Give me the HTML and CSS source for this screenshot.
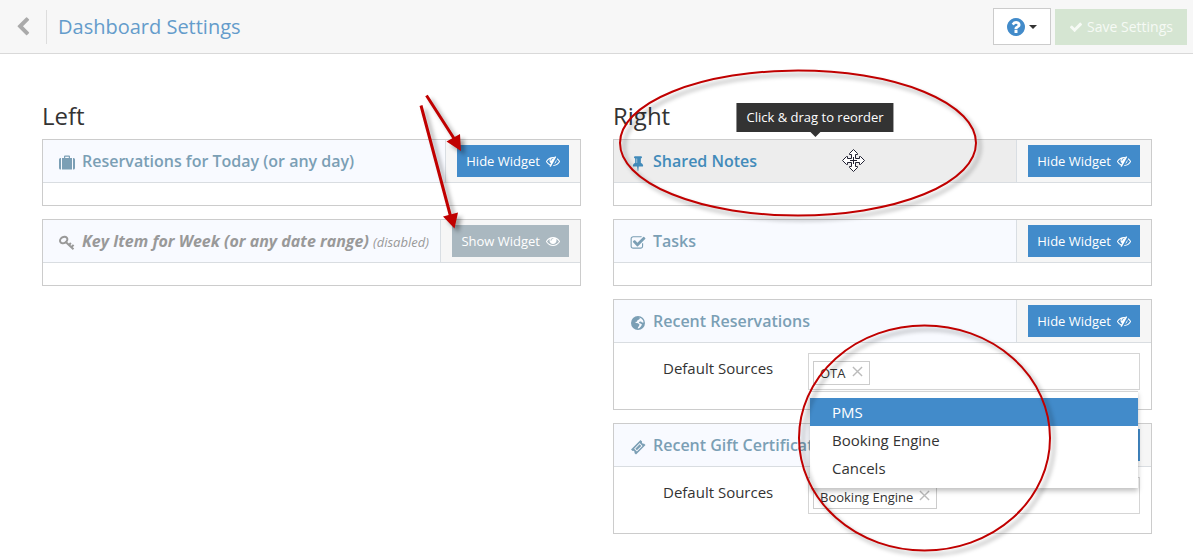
FILE: index.html
```html
<!DOCTYPE html>
<html lang="en">
<head>
    <meta charset="UTF-8">
    <meta name="viewport" content="width=device-width, initial-scale=1.0">
    <title>Dashboard Settings</title>
    <link rel="stylesheet" href="styles.css">
</head>
<body>
    <!-- Shared icons -->
    <svg class="sprite" aria-hidden="true">
        <symbol id="eye" viewBox="0 0 1792 1792"><path d="M1664 960q-152-236-381-353 61 104 61 225 0 185-131.5 316.5t-316.5 131.5-316.5-131.5-131.5-316.5q0-121 61-225-229 117-381 353 133 205 333.5 326.5t434.5 121.5 434.5-121.5 333.5-326.5zm-720-384q0-20-14-34t-34-14q-125 0-214.5 89.5t-89.5 214.5q0 20 14 34t34 14 34-14 14-34q0-86 61-147t147-61q20 0 34-14t14-34zm848 384q0 34-20 69-140 230-376.5 368.5t-499.5 138.5-499.5-139-376.5-368q-20-35-20-69t20-69q140-229 376.5-368t499.5-139 499.5 139 376.5 368q20 35 20 69z"/></symbol>
        <symbol id="eye-slash" viewBox="0 0 1792 1792"><path d="M555 1335l78-141q-87-63-136-159t-49-203q0-121 61-225-229 117-381 353 167 258 427 375zm389-759q0-20-14-34t-34-14q-125 0-214.5 89.5t-89.5 214.5q0 20 14 34t34 14 34-14 14-34q0-86 61-147t147-61q20 0 34-14t14-34zm363-191q0 7-1 9-106 189-316 567t-315 566l-49 89q-10 16-28 16-12 0-134-70-16-10-16-28 0-12 44-87-143-65-263.5-173t-208.5-245q-20-31-20-69t20-69q153-235 380-371t496-136q89 0 180 17l54-97q10-16 28-16 5 0 18 6t31 15.5 33 18.5 31.5 18.5 19.5 11.5q16 10 16 27zm37 447q0 139-79 253.5t-209 164.500l280-502q8 45 8 84zm448 128q0 35-20 69-39 64-109 145-150 172-347.5 267t-419.5 95l74-132q212-18 392.5-137t301.5-307q-115-179-282-294l63-112q95 64 182.5 153t144.5 184q20 34 20 69z"/></symbol>
        <symbol id="times" viewBox="0 0 12 12"><path d="M1 1l10 10M11 1L1 11" fill="none" stroke="currentColor" stroke-width="1.5"/></symbol>
    </svg>

    <!-- Top bar -->
    <header class="topbar">
        <a class="back" href="#" aria-label="Back">
            <svg class="back-icon" viewBox="0 0 1792 1792"><path d="M1427 301l-531 531 531 531q19 19 19 45t-19 45l-166 166q-19 19-45 19t-45-19l-742-742q-19-19-19-45t19-45l742-742q19-19 45-19t45 19l166 166q19 19 19 45t-19 45z"/></svg>
        </a>
        <h1 class="page-title">Dashboard Settings</h1>
        <button class="btn-help" type="button" aria-label="Help">
            <svg class="help-icon" viewBox="128 128 1536 1536"><path d="M1024 1376v-192q0-14-9-23t-23-9h-192q-14 0-23 9t-9 23v192q0 14 9 23t23 9h192q14 0 23-9t9-23zm256-672q0-88-55.5-163t-138.5-116-170-41q-243 0-371 213-15 24 8 42l132 100q7 6 19 6 16 0 25-12 53-68 86-92 34-24 86-24 48 0 85.5 26t37.5 59q0 38-20 61t-68 45q-63 28-115.5 86.5t-52.5 125.5v36q0 14 9 23t23 9h192q14 0 23-9t9-23q0-19 21.5-49.5t54.5-49.5q32-18 49-28.5t46-35 44.5-48 28-60.5 12.5-81zm384 192q0 209-103 385.5t-279.5 279.5-385.5 103-385.5-103-279.5-279.5-103-385.5 103-385.5 279.5-279.5 385.5-103 385.5 103 279.5 279.5 103 385.5z"/></svg>
            <span class="caret"></span>
        </button>
        <button class="btn-save" type="button" disabled>
            <svg class="save-icon" viewBox="0 0 1792 1792"><path d="M1671 566q0 40-28 68l-724 724-136 136q-28 28-68 28t-68-28l-136-136-362-362q-28-28-28-68t28-68l136-136q28-28 68-28t68 28l294 295 656-657q28-28 68-28t68 28l136 136q28 28 28 68z"/></svg>
            Save Settings
        </button>
    </header>

    <main class="columns">
        <!-- Left column -->
        <section class="column">
            <h2 class="column-title">Left</h2>
            <div class="widget">
                <div class="widget-head">
                    <h3 class="widget-title">
                        <svg class="icon" viewBox="0 0 16 16"><path d="M0 4.500Q0 3 1.500 3H2v11.500h-.5Q0 14.500 0 13zM3 3h2V1.500Q5 .5 6 .5h4q1 0 1 1V3h2v11.500H3zm3.200 0h3.600V1.700H6.200zM14 3h.5Q16 3 16 4.500V13q0 1.500-1.500 1.500H14z"/></svg>
                        <span>Reservations for Today (or any day)</span>
                    </h3>
                    <div class="widget-action">
                        <button class="btn" type="button">Hide Widget <svg class="btn-icon"><use href="#eye-slash"/></svg></button>
                    </div>
                </div>
                <div class="widget-body"></div>
            </div>
            <div class="widget disabled">
                <div class="widget-head">
                    <h3 class="widget-title">
                        <svg class="icon" viewBox="0 0 16 16"><g fill="none" stroke="currentColor" stroke-width="2"><ellipse cx="4.700" cy="5" rx="3.800" ry="3" transform="rotate(-30 4.700 5)"/><path d="M7 7.300l7.500 7M12 12.500l2.600-2.600M9.700 10.200l2.200-2.200"/></g></svg>
                        <span>Key Item for Week (or any date range) <small class="note">(disabled)</small></span>
                    </h3>
                    <div class="widget-action">
                        <button class="btn btn-off" type="button">Show Widget <svg class="btn-icon"><use href="#eye"/></svg></button>
                    </div>
                </div>
                <div class="widget-body"></div>
            </div>
        </section>

        <!-- Right column -->
        <section class="column">
            <h2 class="column-title">Right</h2>
            <div class="widget">
                <div class="widget-head">
                    <h3 class="widget-title hovered">
                        <svg class="icon" viewBox="0 0 1792 1792"><path d="M800 864v-448q0-14-9-23t-23-9-23 9-9 23v448q0 14 9 23t23 9 23-9 9-23zm672 352q0 26-19 45t-45 19h-429l-51 483q-2 12-10.5 20.5t-20.5 8.500h-1q-27 0-32-27l-76-485h-404q-26 0-45-19t-19-45q0-123 78.5-221.5t177.5-98.500v-512q-52 0-90-38t-38-90 38-90 90-38h640q52 0 90 38t38 90-38 90-90 38v512q99 0 177.5 98.5t78.5 221.500z"/></svg>
                        <span>Shared Notes</span>
                        <span class="tooltip" role="tooltip">Click &amp; drag to reorder</span>
                        <svg class="move-cursor" viewBox="0 0 23 23"><path d="M11.500.5l4 4v1h-2v4h4v-2h1l4 4-4 4h-1v-2h-4v4h2v1l-4 4-4-4v-1h2v-4h-4v2h-1l-4-4 4-4h1v2h4v-4h-2v-1z"/><path d="M11.500 8v7M8 11.500h7"/></svg>
                    </h3>
                    <div class="widget-action">
                        <button class="btn" type="button">Hide Widget <svg class="btn-icon"><use href="#eye-slash"/></svg></button>
                    </div>
                </div>
                <div class="widget-body"></div>
            </div>
            <div class="widget">
                <div class="widget-head">
                    <h3 class="widget-title">
                        <svg class="icon" viewBox="0 0 1792 1792"><path d="M1472 930v318q0 119-84.5 203.5t-203.5 84.500h-832q-119 0-203.5-84.5t-84.5-203.500v-832q0-119 84.5-203.5t203.5-84.500h832q63 0 117 25 15 7 18 23 3 17-9 29l-49 49q-10 10-23 10-3 0-9-2-23-6-45-6h-832q-66 0-113 47t-47 113v832q0 66 47 113t113 47h832q66 0 113-47t47-113v-254q0-13 9-22l64-64q10-10 23-10 6 0 12 3 20 8 20 29zm231-489l-814 814q-24 24-57 24t-57-24l-430-430q-24-24-24-57t24-57l110-110q24-24 57-24t57 24l263 263 647-647q24-24 57-24t57 24l110 110q24 24 24 57t-24 57z"/></svg>
                        <span>Tasks</span>
                    </h3>
                    <div class="widget-action">
                        <button class="btn" type="button">Hide Widget <svg class="btn-icon"><use href="#eye-slash"/></svg></button>
                    </div>
                </div>
                <div class="widget-body"></div>
            </div>
            <div class="widget">
                <div class="widget-head">
                    <h3 class="widget-title">
                        <svg class="icon" viewBox="0 0 16 16"><path fill-rule="evenodd" d="M8 1a7 7 0 1 1 0 14A7 7 0 0 1 8 1zM8.500 2.200L10 3.200 9 4.600 7.500 5.300 6.800 6.800 5 7l1.200 1 1.800.3 1.500 1.200-.5 1.500-1 1.200L7.800 13.800l2-1 1.400-1.800.8-1.600-1.500-1-1.500-.4.4-1.300 1.600-.3 1 1 1.600.2-.6-2.400-1.600-1.800z"/></svg>
                        <span>Recent Reservations</span>
                    </h3>
                    <div class="widget-action">
                        <button class="btn" type="button">Hide Widget <svg class="btn-icon"><use href="#eye-slash"/></svg></button>
                    </div>
                </div>
                <div class="widget-form">
                    <label class="form-label" for="reservation-sources">Default Sources</label>
                    <div class="picker">
                        <div class="picker-box">
                            <span class="chip">OTA <button class="chip-remove" type="button" aria-label="Remove OTA"><svg class="times"><use href="#times"/></svg></button></span>
                            <input class="picker-input" id="reservation-sources" type="text">
                        </div>
                        <ul class="picker-menu" role="listbox" aria-label="Default Sources">
                            <li class="option active" role="option" aria-selected="true">PMS</li>
                            <li class="option" role="option">Booking Engine</li>
                            <li class="option" role="option">Cancels</li>
                        </ul>
                    </div>
                </div>
            </div>
            <div class="widget">
                <div class="widget-head">
                    <h3 class="widget-title">
                        <svg class="icon" viewBox="0 0 16 16"><path fill-rule="evenodd" d="M10.500 1l1.600 1.600q-.5 1.100.2 1.700t1.600.1L15.500 6 6 15.500l-1.600-1.600q.5-1.100-.2-1.700t-1.600-.1L1 10.500zM9.700 4.100L4.100 9.700l2.800 2.800 5.600-5.600zM9.700 5.300l1.600 1.600-4.400 4.400-1.600-1.600z"/></svg>
                        <span>Recent Gift Certificates</span>
                    </h3>
                    <div class="widget-action">
                        <button class="btn" type="button">Hide Widget <svg class="btn-icon"><use href="#eye-slash"/></svg></button>
                    </div>
                </div>
                <div class="widget-form">
                    <label class="form-label" for="gift-sources">Default Sources</label>
                    <div class="picker">
                        <div class="picker-box">
                            <span class="chip">Booking Engine <button class="chip-remove" type="button" aria-label="Remove Booking Engine"><svg class="times"><use href="#times"/></svg></button></span>
                            <input class="picker-input" id="gift-sources" type="text">
                        </div>
                    </div>
                </div>
            </div>
        </section>
    </main>

    <!-- Callouts drawn over the page -->
    <svg class="callouts" width="1193" height="559" viewBox="0 0 1193 559" aria-hidden="true">
        <g fill="none" stroke="#c00000" stroke-width="2">
            <ellipse cx="798" cy="143" rx="178" ry="72.500"/>
            <ellipse cx="924.500" cy="438" rx="125.500" ry="112.500"/>
        </g>
        <g stroke="#c00000" stroke-width="3">
            <path d="M426.500 95.500L455 140M421 105.500L450.500 216"/>
        </g>
        <g fill="#c00000">
            <path d="M461 151l-14.500-9.500L460 134zM454.500 228.500L443 216.500l15-4z"/>
        </g>
    </svg>
</body>
</html>
```
FILE: styles.css
```css
/* General Styling */
* { box-sizing: border-box; }
body {
    margin: 0;
    background: #fff;
    color: #333;
    font-family: 'Open Sans', sans-serif;
    font-size: 15px;
    position: relative;
}
h1, h2, h3, ul { margin: 0; padding: 0; font-weight: normal; }
svg { fill: currentColor; flex: none; }
button { font-family: inherit; cursor: pointer; }
.sprite { display: none; }

/* Top bar */
.topbar {
    display: flex;
    align-items: center;
    height: 54px;
    padding: 0 6px 0 0;
    background: #f7f7f7;
    border-bottom: 1px solid #d9d9d9;
}
.back {
    display: flex;
    align-items: center;
    justify-content: center;
    width: 47px;
    height: 34px;
    color: #aaa;
    border-right: 1px solid #ddd;
}
.back-icon { width: 20px; height: 20px; }
.page-title {
    flex: 1;
    padding-left: 11px;
    font-size: 20px;
    line-height: 28px;
    color: #649ccb;
}
.btn-help {
    display: flex;
    align-items: center;
    justify-content: center;
    gap: 4px;
    width: 58px;
    height: 37px;
    padding: 0;
    margin-right: 4px;
    background: #fff;
    border: 1px solid #ccc;
}
.help-icon { width: 18px; height: 18px; color: #428bca; }
.caret {
    border-top: 4px solid #333;
    border-left: 4px solid transparent;
    border-right: 4px solid transparent;
}
.btn-save {
    display: flex;
    align-items: center;
    justify-content: center;
    gap: 4px;
    width: 132px;
    height: 36px;
    padding: 0;
    font-size: 14px;
    color: #f6faf5;
    background: #d5e5d2;
    border: none;
}
.save-icon { width: 14px; height: 14px; }

/* Columns */
.columns {
    display: grid;
    grid-template-columns: 1fr 1fr;
    gap: 32px;
    padding: 45px 41px 25px 42px;
}
.column {
    display: flex;
    flex-direction: column;
    gap: 13px;
    min-width: 0;
}
.column-title {
    font-size: 24px;
    line-height: 34px;
    margin-bottom: -7px;
}

/* Widgets */
.widget { border: 1px solid #ccc; }
.widget-head {
    display: flex;
    height: 43px;
    background: #f6f6f6;
    border-bottom: 1px solid #d9dde1;
}
.widget-title {
    position: relative;
    flex: 1;
    display: flex;
    align-items: center;
    gap: 7px;
    min-width: 0;
    padding-left: 16px;
    font-size: 16px;
    font-weight: 600;
    color: #7b9fb5;
    white-space: nowrap;
    background: #f8faff;
    border-right: 1px solid #d9dee3;
}
.widget-title.hovered { color: #428bba; background: #ededed; }
.icon { width: 16px; height: 16px; margin-top: 3px; }
.disabled .widget-title { color: #999; font-weight: 700; font-style: italic; }
.note { font-size: 13px; font-weight: normal; }
.widget-action {
    display: flex;
    align-items: center;
    padding: 0 11px;
}
.btn {
    display: flex;
    align-items: center;
    gap: 6px;
    height: 32px;
    padding: 0 9px;
    font-size: 13px;
    color: #fff;
    background: #428bca;
    border: none;
}
.btn-off { background: #aab8c0; }
.btn-icon { width: 14px; height: 14px; }
.widget-body { height: 22px; }

/* Tooltip and drag cursor */
.tooltip {
    position: absolute;
    left: 50%;
    bottom: 50px;
    transform: translateX(-50%);
    padding: 0 10px;
    font-size: 13px;
    font-weight: normal;
    line-height: 29px;
    color: #fff;
    background: #333;
}
.tooltip::after {
    content: '';
    position: absolute;
    top: 100%;
    left: 50%;
    margin-left: -5px;
    border-top: 5px solid #333;
    border-left: 5px solid transparent;
    border-right: 5px solid transparent;
}
.move-cursor {
    position: absolute;
    left: 228px;
    top: 9px;
    width: 23px;
    height: 23px;
    fill: #fff;
    stroke: #223;
}

/* Source pickers */
.widget-form {
    display: grid;
    grid-template-columns: 194px minmax(0, 1fr);
    padding: 10px 11px 19px 0;
}
.form-label {
    padding-left: 49px;
    line-height: 30px;
}
.picker { position: relative; }
.picker-box {
    display: flex;
    align-items: flex-end;
    height: 37px;
    padding: 4px;
    border: 1px solid #d5d5d5;
}
.chip {
    display: flex;
    align-items: center;
    gap: 6px;
    height: 24px;
    padding: 0 6px;
    font-size: 13px;
    white-space: nowrap;
    border: 1px solid #ccc;
}
.chip-remove {
    display: flex;
    padding: 0 0 3px;
    color: #bbb;
    background: none;
    border: none;
}
.times { width: 11px; height: 11px; }
.picker-input {
    flex: 1;
    min-width: 0;
    height: 24px;
    padding: 0 4px;
    font: inherit;
    background: none;
    border: none;
    outline: none;
}
.picker-menu {
    position: absolute;
    z-index: 2;
    top: 38px;
    left: 2px;
    right: 2px;
    padding: 6px 0;
    list-style: none;
    background: #fff;
    border-top: 1px solid #d5d5d5;
    box-shadow: 0 3px 5px rgba(0, 0, 0, 0.25);
}
.option {
    padding-left: 22px;
    line-height: 28px;
}
.option.active { color: #fff; background: #428bca; }

/* Callouts */
.callouts {
    position: absolute;
    z-index: 3;
    top: 0;
    left: 0;
    pointer-events: none;
    filter: drop-shadow(4px 4px 2px rgba(0, 0, 0, 0.35));
}
```
